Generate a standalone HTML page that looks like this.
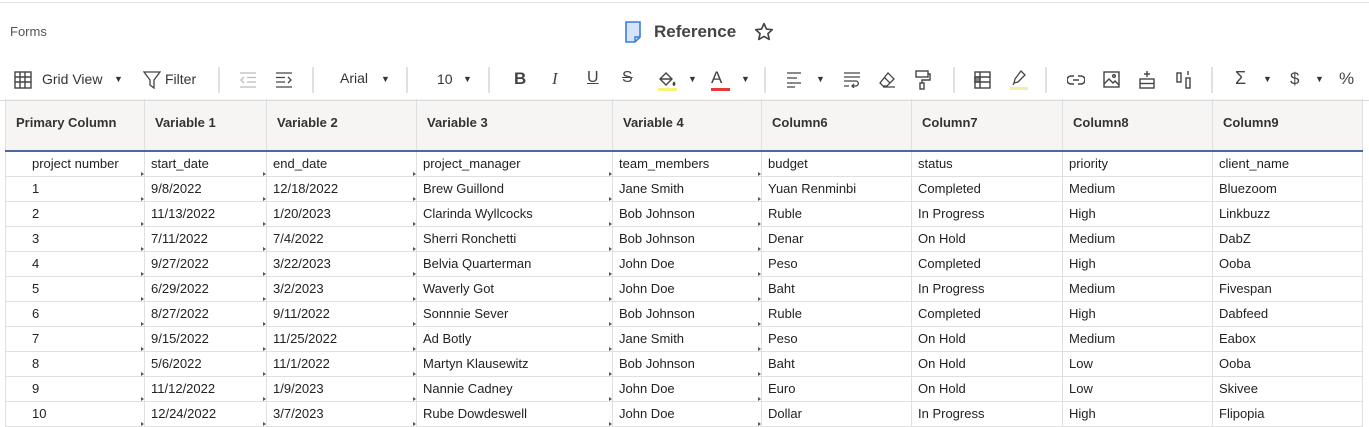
<!DOCTYPE html>
<html><head><meta charset="utf-8"><style>
*{box-sizing:border-box;margin:0;padding:0}
body{width:1369px;height:410px;overflow:hidden;background:#fff;font-family:"Liberation Sans",Arial,sans-serif;position:relative;color:#222}
.a{position:absolute;white-space:nowrap}
.tb{font-size:14px;color:#333;top:71px}
.sep{position:absolute;top:67px;width:2px;height:26px;background:#e0e0e0}
.ic{position:absolute;top:70px}
.tri{font-size:9px;color:#333}
table{position:absolute;left:5px;top:99px;border-collapse:collapse;table-layout:fixed}
td{border:1px solid #e0e0e0;font-size:13px;height:25px;padding:0 0 0 6px;white-space:nowrap;overflow:hidden;position:relative}
tr.h td{height:52px;background:#f6f5f3;font-weight:bold;color:#333;vertical-align:top;padding-top:16px;padding-left:10px;border-top:none;border-bottom:2px solid #4b68a0}
td.p{padding-left:26px}
tr.h td.p{padding-left:10px}
td.m::after{content:"";position:absolute;right:0;bottom:0;border-left:3px solid #555;border-top:2px solid transparent;border-bottom:2px solid transparent}
</style></head><body>
<div style="position:absolute;left:0;top:2px;width:1369px;height:1px;background:#e3e3e3"></div>
<div class="a" style="left:10px;top:24px;font-size:13px;color:#555">Forms</div>
<svg class="a" style="left:624px;top:21px" width="18" height="22" viewBox="0 0 18 22"><path d="M2 1h14v15l-5 5H2z" fill="#d6e4fa" stroke="#3a7dd8" stroke-width="1.6"/><path d="M11 21v-5h5" fill="none" stroke="#3a7dd8" stroke-width="1.4"/></svg>
<div class="a" style="left:654px;top:22px;font-size:17px;font-weight:bold;color:#444">Reference</div>
<svg class="a" style="left:754px;top:22px" width="20" height="19" viewBox="0 0 24 23"><path d="M12 2l3 6.5 7 .8-5.2 4.8 1.5 7L12 17.5 5.7 21.1l1.5-7L2 9.3l7-.8z" fill="none" stroke="#444" stroke-width="2" stroke-linejoin="round"/></svg>

<svg class="ic" style="left:14px;top:71px" width="18" height="18" viewBox="0 0 18 18" fill="none" stroke="#444" stroke-width="1.4"><rect x="1" y="1" width="16" height="16"/><path d="M1 6h16M1 11h16M6 1v16M11 1v16"/></svg>
<div class="a tb" style="left:42px">Grid View</div><div class="a tri" style="left:114px;top:74px">▼</div>
<svg class="ic" style="left:143px;top:71px" width="18" height="18" viewBox="0 0 18 18" fill="none" stroke="#444" stroke-width="1.3"><path d="M1 1h16l-6 8v8l-4-3V9z"/></svg>
<div class="a tb" style="left:165px">Filter</div>
<div class="sep" style="left:218px"></div>
<svg class="ic" style="left:239px;top:72px" width="18" height="16" viewBox="0 0 18 16" stroke="#bbb" stroke-width="1.3"><path d="M1 1h16M8 5.5h9M8 10h9M1 15h16M5 5L2 8l3 3" fill="none"/></svg>
<svg class="ic" style="left:275px;top:72px" width="18" height="16" viewBox="0 0 18 16" stroke="#444" stroke-width="1.3"><path d="M1 1h16M1 5.5h9M1 10h9M1 15h16M13 5l3 3-3 3" fill="none"/></svg>
<div class="sep" style="left:312px"></div>
<div class="a tb" style="left:340px;top:70px">Arial</div><div class="a tri" style="left:381px;top:74px">▼</div>
<div class="sep" style="left:406px"></div>
<div class="a tb" style="left:437px">10</div><div class="a tri" style="left:463px;top:74px">▼</div>
<div class="sep" style="left:488px"></div>
<div class="a" style="left:514px;top:69px;font-size:17px;font-weight:bold;color:#444">B</div>
<div class="a" style="left:552px;top:69px;font-size:17px;font-style:italic;color:#444;font-family:'Liberation Serif',serif">I</div>
<div class="a" style="left:587px;top:69px;font-size:16px;color:#444;text-decoration:underline">U</div>
<div class="a" style="left:622px;top:69px;font-size:16px;color:#444;text-decoration:line-through">S</div>
<svg class="ic" style="left:657px;top:70px" width="22" height="22" viewBox="0 0 22 22" fill="none" stroke="#444" stroke-width="1.4"><path d="M3 9l6-6 6 6-6 6zM3 9h12M17 12c-1 2-1 3 0 3s1-1 0-3"/><rect x="1" y="18" width="19" height="3" fill="#f9f27a" stroke="none"/></svg>
<div class="a tri" style="left:688px;top:74px">▼</div>
<div class="a" style="left:711px;top:68px;font-size:17px;color:#444">A</div>
<div style="position:absolute;left:711px;top:88px;width:19px;height:3px;background:#e53935"></div>
<div class="a tri" style="left:741px;top:74px">▼</div>
<div class="sep" style="left:764px"></div>
<svg class="ic" style="left:786px;top:72px" width="16" height="16" viewBox="0 0 16 16" stroke="#444" stroke-width="1.3"><path d="M1 1h14M1 6h10M1 11h14M1 15h8"/></svg>
<div class="a tri" style="left:816px;top:74px">▼</div>
<svg class="ic" style="left:843px;top:72px" width="18" height="16" viewBox="0 0 18 16" stroke="#444" stroke-width="1.3" fill="none"><path d="M1 1h16M1 5h16M1 9h12c3 0 3 5 0 5h-3M1 14h5M11 12l-2 2 2 2"/></svg>
<svg class="ic" style="left:878px;top:71px" width="18" height="18" viewBox="0 0 18 18" stroke="#444" stroke-width="1.3" fill="none"><path d="M10 2l6 6-7 7H5l-3-3zM6 6l6 6M5 16h12"/></svg>
<svg class="ic" style="left:915px;top:70px" width="16" height="20" viewBox="0 0 16 20" stroke="#444" stroke-width="1.4" fill="none"><rect x="1" y="1" width="12" height="6"/><path d="M13 4h2v6H7v3"/><rect x="5" y="13" width="4" height="6"/></svg>
<div class="sep" style="left:953px"></div>
<svg class="ic" style="left:974px;top:71px" width="17" height="18" viewBox="0 0 17 18" stroke="#444" stroke-width="1.4" fill="none"><rect x="1" y="1" width="15" height="16"/><path d="M1 6h15M1 11h15M6 1v16"/><rect x="1" y="6" width="5" height="5" fill="#888"/></svg>
<svg class="ic" style="left:1009px;top:69px" width="20" height="22" viewBox="0 0 20 22" stroke="#444" stroke-width="1.3" fill="none"><path d="M12 2l4 4-7 7-4 1 1-4zM5 14l-1 2"/><rect x="1" y="18" width="18" height="3" fill="#f9ed9c" stroke="none"/></svg>
<div class="sep" style="left:1045px"></div>
<svg class="ic" style="left:1067px;top:75px" width="18" height="10" viewBox="0 0 18 10" stroke="#444" stroke-width="1.5" fill="none"><path d="M7 1H4a4 4 0 000 8h3M11 1h3a4 4 0 010 8h-3M6 5h6"/></svg>
<svg class="ic" style="left:1103px;top:71px" width="17" height="17" viewBox="0 0 17 17" stroke="#444" stroke-width="1.4" fill="none"><rect x="1" y="1" width="15" height="15"/><path d="M1 13l5-5 4 4 2-2 4 4"/><circle cx="11" cy="5" r="1.3"/></svg>
<svg class="ic" style="left:1139px;top:70px" width="16" height="20" viewBox="0 0 16 20" stroke="#444" stroke-width="1.4" fill="none"><path d="M8 1v6M5 4h6"/><rect x="1" y="9" width="14" height="9"/><path d="M1 13.5h14"/></svg>
<svg class="ic" style="left:1176px;top:70px" width="16" height="20" viewBox="0 0 16 20" stroke="#444" stroke-width="1.4" fill="none"><rect x="1" y="3" width="4" height="9"/><rect x="10" y="8" width="4" height="10"/><path d="M12 1v4"/></svg>
<div class="sep" style="left:1211px"></div>
<div class="a" style="left:1235px;top:68px;font-size:18px;color:#444">Σ</div><div class="a tri" style="left:1263px;top:74px">▼</div>
<div class="a" style="left:1290px;top:69px;font-size:17px;color:#444">$</div><div class="a tri" style="left:1315px;top:74px">▼</div>
<div class="a" style="left:1339px;top:69px;font-size:17px;color:#444">%</div>

<table>
<colgroup><col style="width:139px"><col style="width:122px"><col style="width:150px"><col style="width:196px"><col style="width:149px"><col style="width:150px"><col style="width:151px"><col style="width:150px"><col style="width:150px"></colgroup>
<tr class="h"><td class="p">Primary Column</td><td>Variable 1</td><td>Variable 2</td><td>Variable 3</td><td>Variable 4</td><td>Column6</td><td>Column7</td><td>Column8</td><td>Column9</td></tr>
<tr><td class="p m">project number</td><td class="m">start_date</td><td class="m">end_date</td><td class="m">project_manager</td><td class="m">team_members</td><td>budget</td><td>status</td><td>priority</td><td>client_name</td></tr>
<tr><td class="p m">1</td><td class="m">9/8/2022</td><td class="m">12/18/2022</td><td class="m">Brew Guillond</td><td class="m">Jane Smith</td><td>Yuan Renminbi</td><td>Completed</td><td>Medium</td><td>Bluezoom</td></tr>
<tr><td class="p m">2</td><td class="m">11/13/2022</td><td class="m">1/20/2023</td><td class="m">Clarinda Wyllcocks</td><td class="m">Bob Johnson</td><td>Ruble</td><td>In Progress</td><td>High</td><td>Linkbuzz</td></tr>
<tr><td class="p m">3</td><td class="m">7/11/2022</td><td class="m">7/4/2022</td><td class="m">Sherri Ronchetti</td><td class="m">Bob Johnson</td><td>Denar</td><td>On Hold</td><td>Medium</td><td>DabZ</td></tr>
<tr><td class="p m">4</td><td class="m">9/27/2022</td><td class="m">3/22/2023</td><td class="m">Belvia Quarterman</td><td class="m">John Doe</td><td>Peso</td><td>Completed</td><td>High</td><td>Ooba</td></tr>
<tr><td class="p m">5</td><td class="m">6/29/2022</td><td class="m">3/2/2023</td><td class="m">Waverly Got</td><td class="m">John Doe</td><td>Baht</td><td>In Progress</td><td>Medium</td><td>Fivespan</td></tr>
<tr><td class="p m">6</td><td class="m">8/27/2022</td><td class="m">9/11/2022</td><td class="m">Sonnnie Sever</td><td class="m">Bob Johnson</td><td>Ruble</td><td>Completed</td><td>High</td><td>Dabfeed</td></tr>
<tr><td class="p m">7</td><td class="m">9/15/2022</td><td class="m">11/25/2022</td><td class="m">Ad Botly</td><td class="m">Jane Smith</td><td>Peso</td><td>On Hold</td><td>Medium</td><td>Eabox</td></tr>
<tr><td class="p m">8</td><td class="m">5/6/2022</td><td class="m">11/1/2022</td><td class="m">Martyn Klausewitz</td><td class="m">Bob Johnson</td><td>Baht</td><td>On Hold</td><td>Low</td><td>Ooba</td></tr>
<tr><td class="p m">9</td><td class="m">11/12/2022</td><td class="m">1/9/2023</td><td class="m">Nannie Cadney</td><td class="m">John Doe</td><td>Euro</td><td>On Hold</td><td>Low</td><td>Skivee</td></tr>
<tr><td class="p m">10</td><td class="m">12/24/2022</td><td class="m">3/7/2023</td><td class="m">Rube Dowdeswell</td><td class="m">John Doe</td><td>Dollar</td><td>In Progress</td><td>High</td><td>Flipopia</td></tr>
</table>
<div style="position:absolute;left:0;top:100px;width:1369px;height:1px;background:#dcdcdc"></div>
</body></html>
